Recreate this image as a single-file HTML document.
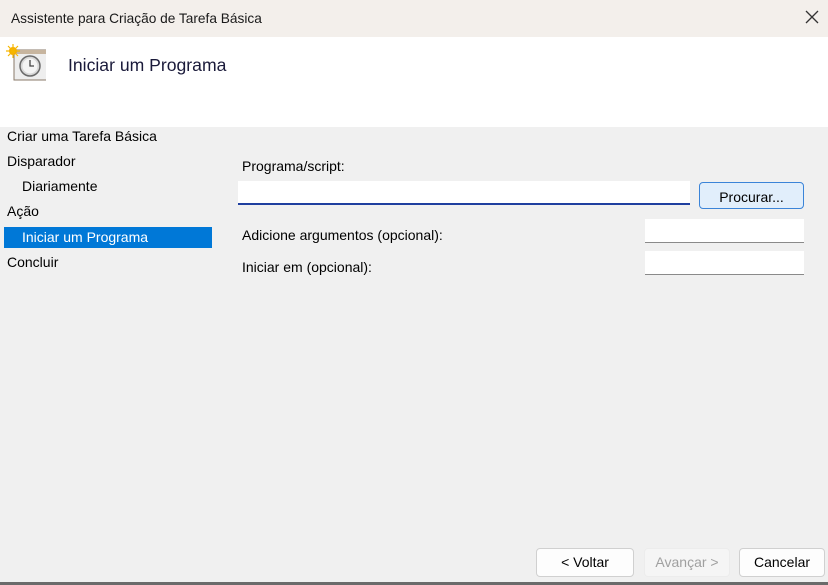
<!DOCTYPE html>
<html><head><meta charset="utf-8">
<style>
*{margin:0;padding:0;box-sizing:border-box}
body{width:828px;height:585px;overflow:hidden;background:#f0f0f0;font-family:"Liberation Sans",sans-serif;font-size:14px;color:#000;position:relative}
.a{position:absolute;white-space:nowrap}
.title{left:0;top:0;width:828px;height:37px;background:#f3efeb}
.hdr{left:0;top:37px;width:828px;height:90px;background:#fff}
.inp{background:#fff;border-bottom:1px solid #8a8a8a}
.btn{background:#fdfdfd;border:1px solid #d0d0d0;border-radius:4px;text-align:center;line-height:27px;font-size:14px}
</style></head><body>
<div class="a title"></div>
<div class="a" style="left:11px;top:11px;font-size:13.7px;color:#1a1a1a">Assistente para Criação de Tarefa Básica</div>
<svg class="a" style="left:804px;top:9px" width="16" height="16"><path d="M2 2L14 14M14 2L2 14" stroke="#333" stroke-width="1.3"/></svg>
<div class="a hdr"></div>
<svg class="a" style="left:6px;top:44px" width="40" height="38">
<rect x="8" y="6" width="35" height="30" fill="#eee" stroke="#8a7a6a"/>
<rect x="8" y="6" width="35" height="4" fill="#c7b59f"/>
<circle cx="24" cy="22" r="10" fill="#d8d8d8" stroke="#6a6a6a" stroke-width="1.5"/>
<circle cx="24" cy="22" r="7.5" fill="#f4f4f4"/>
<path d="M24 16V22H28" stroke="#444" stroke-width="1.3" fill="none"/>
<circle cx="7" cy="7" r="4" fill="#f6a800"/>
<path d="M7 0V14M0 7H14M2 2L12 12M12 2L2 12" stroke="#f6b800" stroke-width="1.2"/>
</svg>
<div class="a" style="left:68px;top:55px;font-size:17.6px;color:#1a1a3a">Iniciar um Programa</div>

<div class="a" style="left:7px;top:128px">Criar uma Tarefa Básica</div>
<div class="a" style="left:7px;top:153px">Disparador</div>
<div class="a" style="left:22px;top:178px">Diariamente</div>
<div class="a" style="left:7px;top:203px">Ação</div>
<div class="a" style="left:4px;top:227px;width:208px;height:21px;background:#0078d7"></div>
<div class="a" style="left:22px;top:229px;color:#fff">Iniciar um Programa</div>
<div class="a" style="left:7px;top:254px">Concluir</div>

<div class="a" style="left:242px;top:158px">Programa/script:</div>
<div class="a inp" style="left:238px;top:181px;width:452px;height:24px;border-bottom:2px solid #1f3f9f"></div>
<div class="a btn" style="left:699px;top:182px;width:105px;height:27px;background:#e1eefb;border-color:#3b84d8;line-height:28px">Procurar...</div>
<div class="a" style="left:242px;top:227px">Adicione argumentos (opcional):</div>
<div class="a inp" style="left:645px;top:219px;width:159px;height:24px"></div>
<div class="a" style="left:242px;top:259px">Iniciar em (opcional):</div>
<div class="a inp" style="left:645px;top:251px;width:159px;height:24px"></div>

<div class="a btn" style="left:536px;top:548px;width:98px;height:29px">&lt; Voltar</div>
<div class="a btn" style="left:644px;top:548px;width:86px;height:29px;background:#f5f5f5;border-color:#ececec;color:#a0a0a0">Avançar &gt;</div>
<div class="a btn" style="left:739px;top:548px;width:86px;height:29px">Cancelar</div>
<div class="a" style="left:0;top:582px;width:828px;height:3px;background:#6a6a6a"></div>
</body></html>
